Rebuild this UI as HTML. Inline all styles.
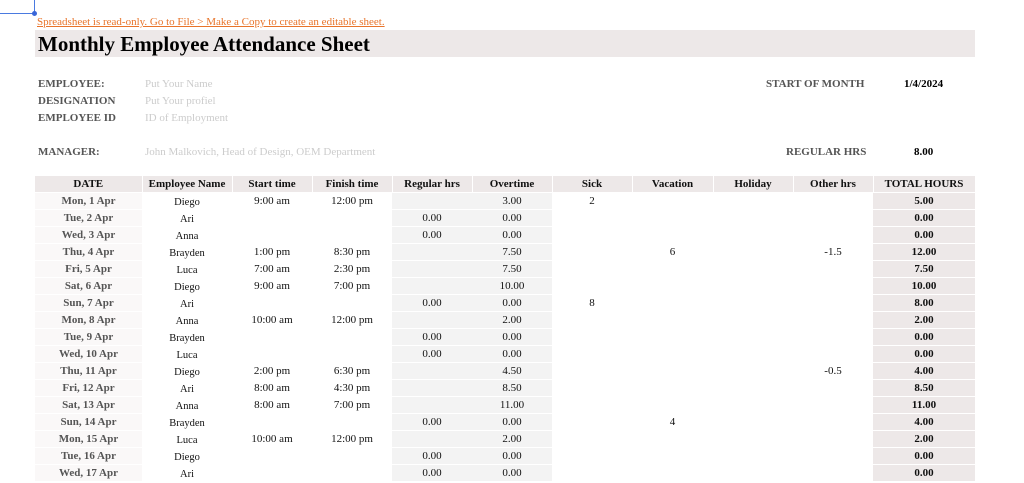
<!DOCTYPE html>
<html><head><meta charset="utf-8"><style>
body{margin:0;width:1024px;height:483px;overflow:hidden;background:#fff;font-family:"Liberation Serif",serif;position:relative}
.a{position:absolute;white-space:nowrap}
.lbl{font-weight:bold;color:#555;font-size:11px}
.ph{color:#ccc;font-size:11px}
table{position:absolute;left:35px;top:176px;border-collapse:collapse;table-layout:fixed;font-size:11px}
td{height:16px;padding:0;text-align:center;color:#111;border-bottom:1px dotted #fff;line-height:16px;overflow:hidden}
tr.h td{font-weight:bold;background:#ede8e8;border-right:1px dotted #fff}
td.d{font-weight:bold;color:#555;background:#faf8f8}
td.n{font-size:10.5px}
td.n span{position:relative;top:2px}
td.g{background:#f3f3f3}
td.t{font-weight:bold;background:#ede8e8}
</style></head><body>
<div class="a" style="top:0;width:1px;height:14px;left:34px;background:#4a7ae0"></div>
<div class="a" style="left:0;top:13px;width:35px;height:1px;background:#4a7ae0"></div>
<div class="a" style="left:32px;top:11px;width:5px;height:5px;border-radius:50%;background:#3a66d8"></div>
<div class="a" style="left:37px;top:16px;font-size:11px;color:#e8742a;text-decoration:underline">Spreadsheet is read-only. Go to File &gt; Make a Copy to create an editable sheet.</div>
<div class="a" style="left:35px;top:30px;width:940px;height:27px;background:#ede8e8"></div>
<div class="a" style="left:38px;top:32px;font-size:21px;font-weight:bold;color:#000">Monthly Employee Attendance Sheet</div>
<div class="a lbl" style="left:38px;top:78px">EMPLOYEE:</div>
<div class="a lbl" style="left:38px;top:95px">DESIGNATION</div>
<div class="a lbl" style="left:38px;top:112px">EMPLOYEE ID</div>
<div class="a lbl" style="left:38px;top:146px">MANAGER:</div>
<div class="a ph" style="left:145px;top:78px">Put Your Name</div>
<div class="a ph" style="left:145px;top:95px">Put Your profiel</div>
<div class="a ph" style="left:145px;top:112px">ID of Employment</div>
<div class="a ph" style="left:145px;top:146px">John Malkovich, Head of Design, OEM Department</div>
<div class="a lbl" style="left:766px;top:78px">START OF MONTH</div>
<div class="a lbl" style="left:786px;top:146px">REGULAR HRS</div>
<div class="a" style="left:904px;top:78px;font-size:11px;font-weight:bold">1/4/2024</div>
<div class="a" style="left:914px;top:146px;font-size:11px;font-weight:bold">8.00</div>
<table>
<colgroup><col style="width:107px"><col style="width:90px"><col style="width:80px"><col style="width:80px"><col style="width:80px"><col style="width:80px"><col style="width:80px"><col style="width:81px"><col style="width:80px"><col style="width:80px"><col style="width:102px"></colgroup>
<tr class="h"><td>DATE</td><td>Employee Name</td><td>Start time</td><td>Finish time</td><td>Regular hrs</td><td>Overtime</td><td>Sick</td><td>Vacation</td><td>Holiday</td><td>Other hrs</td><td>TOTAL HOURS</td></tr>
<tr><td class="d">Mon, 1 Apr</td><td class="n"><span>Diego</span></td><td>9:00 am</td><td>12:00 pm</td><td class="g"></td><td class="g">3.00</td><td>2</td><td></td><td></td><td></td><td class="t">5.00</td></tr>
<tr><td class="d">Tue, 2 Apr</td><td class="n"><span>Ari</span></td><td></td><td></td><td class="g">0.00</td><td class="g">0.00</td><td></td><td></td><td></td><td></td><td class="t">0.00</td></tr>
<tr><td class="d">Wed, 3 Apr</td><td class="n"><span>Anna</span></td><td></td><td></td><td class="g">0.00</td><td class="g">0.00</td><td></td><td></td><td></td><td></td><td class="t">0.00</td></tr>
<tr><td class="d">Thu, 4 Apr</td><td class="n"><span>Brayden</span></td><td>1:00 pm</td><td>8:30 pm</td><td class="g"></td><td class="g">7.50</td><td></td><td>6</td><td></td><td>-1.5</td><td class="t">12.00</td></tr>
<tr><td class="d">Fri, 5 Apr</td><td class="n"><span>Luca</span></td><td>7:00 am</td><td>2:30 pm</td><td class="g"></td><td class="g">7.50</td><td></td><td></td><td></td><td></td><td class="t">7.50</td></tr>
<tr><td class="d">Sat, 6 Apr</td><td class="n"><span>Diego</span></td><td>9:00 am</td><td>7:00 pm</td><td class="g"></td><td class="g">10.00</td><td></td><td></td><td></td><td></td><td class="t">10.00</td></tr>
<tr><td class="d">Sun, 7 Apr</td><td class="n"><span>Ari</span></td><td></td><td></td><td class="g">0.00</td><td class="g">0.00</td><td>8</td><td></td><td></td><td></td><td class="t">8.00</td></tr>
<tr><td class="d">Mon, 8 Apr</td><td class="n"><span>Anna</span></td><td>10:00 am</td><td>12:00 pm</td><td class="g"></td><td class="g">2.00</td><td></td><td></td><td></td><td></td><td class="t">2.00</td></tr>
<tr><td class="d">Tue, 9 Apr</td><td class="n"><span>Brayden</span></td><td></td><td></td><td class="g">0.00</td><td class="g">0.00</td><td></td><td></td><td></td><td></td><td class="t">0.00</td></tr>
<tr><td class="d">Wed, 10 Apr</td><td class="n"><span>Luca</span></td><td></td><td></td><td class="g">0.00</td><td class="g">0.00</td><td></td><td></td><td></td><td></td><td class="t">0.00</td></tr>
<tr><td class="d">Thu, 11 Apr</td><td class="n"><span>Diego</span></td><td>2:00 pm</td><td>6:30 pm</td><td class="g"></td><td class="g">4.50</td><td></td><td></td><td></td><td>-0.5</td><td class="t">4.00</td></tr>
<tr><td class="d">Fri, 12 Apr</td><td class="n"><span>Ari</span></td><td>8:00 am</td><td>4:30 pm</td><td class="g"></td><td class="g">8.50</td><td></td><td></td><td></td><td></td><td class="t">8.50</td></tr>
<tr><td class="d">Sat, 13 Apr</td><td class="n"><span>Anna</span></td><td>8:00 am</td><td>7:00 pm</td><td class="g"></td><td class="g">11.00</td><td></td><td></td><td></td><td></td><td class="t">11.00</td></tr>
<tr><td class="d">Sun, 14 Apr</td><td class="n"><span>Brayden</span></td><td></td><td></td><td class="g">0.00</td><td class="g">0.00</td><td></td><td>4</td><td></td><td></td><td class="t">4.00</td></tr>
<tr><td class="d">Mon, 15 Apr</td><td class="n"><span>Luca</span></td><td>10:00 am</td><td>12:00 pm</td><td class="g"></td><td class="g">2.00</td><td></td><td></td><td></td><td></td><td class="t">2.00</td></tr>
<tr><td class="d">Tue, 16 Apr</td><td class="n"><span>Diego</span></td><td></td><td></td><td class="g">0.00</td><td class="g">0.00</td><td></td><td></td><td></td><td></td><td class="t">0.00</td></tr>
<tr><td class="d">Wed, 17 Apr</td><td class="n"><span>Ari</span></td><td></td><td></td><td class="g">0.00</td><td class="g">0.00</td><td></td><td></td><td></td><td></td><td class="t">0.00</td></tr>
</table>
</body></html>
